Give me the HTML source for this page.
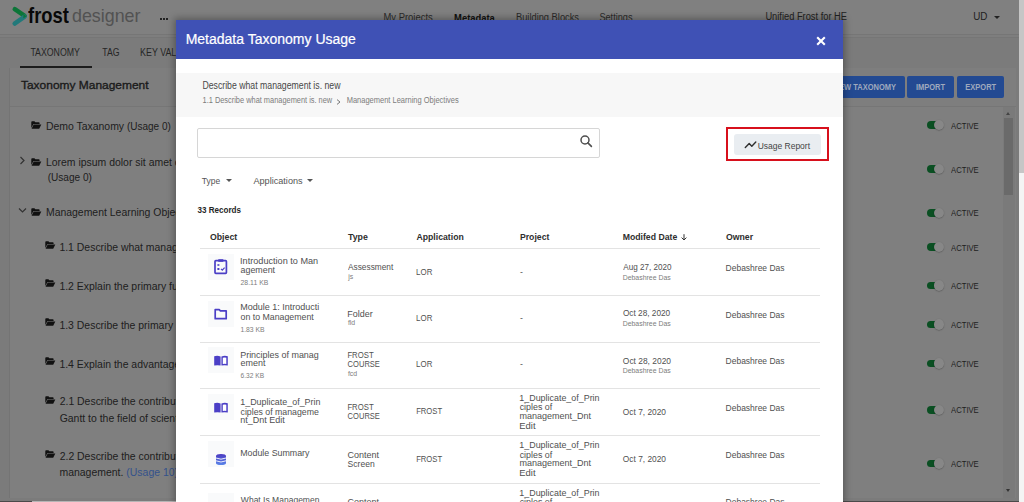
<!DOCTYPE html>
<html><head><meta charset="utf-8">
<style>
*{margin:0;padding:0;box-sizing:border-box}
html,body{width:1024px;height:502px;overflow:hidden}
body{position:relative;background:#7b7b7b;font-family:"Liberation Sans",sans-serif}
.a{position:absolute}
.t{position:absolute;white-space:nowrap;line-height:1}
</style></head><body>
<div class="a" style="left:0px;top:0px;width:1019px;height:502px;background:#7b7b7b;z-index:0;"></div>
<div class="a" style="left:0px;top:0px;width:1019px;height:34px;background:#808080;z-index:0;"></div>
<div class="a" style="left:0px;top:34px;width:1019px;height:1px;background:#767676;z-index:0;"></div>
<div class="a" style="left:0px;top:35px;width:1019px;height:2px;background:#7e7e7e;z-index:0;"></div>
<div class="a" style="left:0px;top:37px;width:1019px;height:1px;background:#767676;z-index:0;"></div>
<div class="a" style="left:9px;top:68px;width:1007px;height:430px;background:#7f7f7f;z-index:0;border-left:1px solid #747474"></div>
<div class="a" style="left:10px;top:68px;width:1006px;height:38px;background:#7e7e7e;z-index:0;"></div>
<div class="a" style="left:10px;top:106px;width:1006px;height:1px;background:#767676;z-index:0;"></div>
<svg class="a" style="left:8px;top:3px;z-index:1" width="22" height="26" viewBox="0 0 22 26"><path d="M6.8 6.2 L16.6 12.8" stroke="#0c7538" stroke-width="4.6" stroke-linecap="round"/><path d="M16.6 13.6 L6.6 20.6" stroke="#22797a" stroke-width="4.4" stroke-linecap="round"/><path d="M15.4 11.2 L18.6 13.2 L15.4 15.2Z" fill="#0c7538"/></svg>
<div class="t" style="left:28.12px;top:7.59px;font-size:18.36px;font-weight:bold;color:#080808;transform:scaleY(1.245);transform-origin:0 15.61px;z-index:1;">frost</div>
<div class="t" style="left:71.99px;top:8.42px;font-size:17.86px;color:#525252;z-index:1;">designer</div>
<div class="a" style="left:159.5px;top:18px;width:2px;height:2px;background:#222;z-index:1"></div><div class="a" style="left:162.8px;top:18px;width:2px;height:2px;background:#222;z-index:1"></div><div class="a" style="left:166px;top:18px;width:2px;height:2px;background:#222;z-index:1"></div>
<div class="t" style="left:383.44px;top:13.47px;font-size:9.45px;color:#2a2a2a;transform:scaleY(1.169);transform-origin:0 8.03px;z-index:1;">My Projects</div>
<div class="t" style="left:454.09px;top:13.50px;font-size:9.42px;font-weight:bold;color:#111;transform:scaleY(1.173);transform-origin:0 8.00px;z-index:1;">Metadata</div>
<div class="t" style="left:515.96px;top:13.59px;font-size:9.30px;color:#2a2a2a;transform:scaleY(1.188);transform-origin:0 7.91px;z-index:1;">Building Blocks</div>
<div class="t" style="left:599.39px;top:13.69px;font-size:9.19px;color:#2a2a2a;transform:scaleY(1.202);transform-origin:0 7.81px;z-index:1;">Settings</div>
<div class="t" style="left:765.40px;top:12.59px;font-size:9.30px;color:#222;transform:scaleY(1.188);transform-origin:0 7.91px;z-index:1;">Unified Frost for HE</div>
<div class="t" style="left:973.26px;top:12.33px;font-size:9.85px;color:#222;transform:scaleY(1.092);transform-origin:0 8.37px;z-index:1;">UD</div>
<div class="a" style="left:994px;top:16px;width:0;height:0;border-left:3px solid transparent;border-right:3px solid transparent;border-top:3px solid #222;z-index:1"></div>
<div class="t" style="left:30.42px;top:48.64px;font-size:8.78px;color:#262626;transform:scaleY(1.209);transform-origin:0 7.46px;z-index:1;">TAXONOMY</div>
<div class="t" style="left:102.33px;top:48.68px;font-size:8.73px;color:#262626;transform:scaleY(1.215);transform-origin:0 7.42px;z-index:1;">TAG</div>
<div class="t" style="left:140.09px;top:48.54px;font-size:8.90px;color:#262626;transform:scaleY(1.192);transform-origin:0 7.57px;z-index:1;">KEY VALUE</div>
<div class="a" style="left:20px;top:66px;width:72px;height:2px;background:#1c1c1c;z-index:1;"></div>
<div class="t" style="left:21.01px;top:79.53px;font-size:11.96px;color:#1a1a1a;transform:scaleY(0.948);transform-origin:0 10.17px;z-index:1;-webkit-text-stroke:0.35px #1a1a1a;">Taxonomy Management</div>
<div class="a" style="left:907px;top:76px;width:47px;height:22px;background:#234a92;z-index:1;border-radius:2px"></div>
<div class="t" style="left:915.91px;top:84.31px;font-size:7.52px;font-weight:bold;color:#9fa9bd;transform:scaleY(1.159);transform-origin:0 6.39px;z-index:1;">IMPORT</div>
<div class="a" style="left:957px;top:76px;width:47px;height:22px;background:#234a92;z-index:1;border-radius:2px"></div>
<div class="t" style="left:965.31px;top:84.31px;font-size:7.52px;font-weight:bold;color:#9fa9bd;transform:scaleY(1.159);transform-origin:0 6.39px;z-index:1;">EXPORT</div>
<div class="a" style="left:800px;top:76px;width:105px;height:22px;background:#234a92;z-index:1;border-radius:2px"></div>
<div class="t" style="left:833.56px;top:84.31px;font-size:7.52px;font-weight:bold;color:#9fa9bd;transform:scaleY(1.159);transform-origin:0 6.39px;z-index:1;">NEW TAXONOMY</div>
<svg class="a" style="left:31px;top:120.5px;z-index:1" width="10.5" height="8.2" viewBox="0 0 11 9" preserveAspectRatio="none"><path d="M0.3 1.2 Q0.3 0.3 1.2 0.3 H3.6 L4.6 1.3 H8.2 Q9 1.3 9 2.1 V3.2 H2.6 L0.3 7.8Z" fill="#111"/><path d="M2.8 3.9 H10.8 L8.6 8.6 H0.6Z" fill="#111"/></svg>
<svg class="a" style="left:31px;top:158px;z-index:1" width="10.5" height="8.2" viewBox="0 0 11 9" preserveAspectRatio="none"><path d="M0.3 1.2 Q0.3 0.3 1.2 0.3 H3.6 L4.6 1.3 H8.2 Q9 1.3 9 2.1 V3.2 H2.6 L0.3 7.8Z" fill="#111"/><path d="M2.8 3.9 H10.8 L8.6 8.6 H0.6Z" fill="#111"/></svg>
<svg class="a" style="left:31px;top:208px;z-index:1" width="10.5" height="8.2" viewBox="0 0 11 9" preserveAspectRatio="none"><path d="M0.3 1.2 Q0.3 0.3 1.2 0.3 H3.6 L4.6 1.3 H8.2 Q9 1.3 9 2.1 V3.2 H2.6 L0.3 7.8Z" fill="#111"/><path d="M2.8 3.9 H10.8 L8.6 8.6 H0.6Z" fill="#111"/></svg>
<svg class="a" style="left:45px;top:240.5px;z-index:1" width="10.5" height="8.2" viewBox="0 0 11 9" preserveAspectRatio="none"><path d="M0.3 1.2 Q0.3 0.3 1.2 0.3 H3.6 L4.6 1.3 H8.2 Q9 1.3 9 2.1 V3.2 H2.6 L0.3 7.8Z" fill="#111"/><path d="M2.8 3.9 H10.8 L8.6 8.6 H0.6Z" fill="#111"/></svg>
<svg class="a" style="left:45px;top:279.3px;z-index:1" width="10.5" height="8.2" viewBox="0 0 11 9" preserveAspectRatio="none"><path d="M0.3 1.2 Q0.3 0.3 1.2 0.3 H3.6 L4.6 1.3 H8.2 Q9 1.3 9 2.1 V3.2 H2.6 L0.3 7.8Z" fill="#111"/><path d="M2.8 3.9 H10.8 L8.6 8.6 H0.6Z" fill="#111"/></svg>
<svg class="a" style="left:45px;top:318px;z-index:1" width="10.5" height="8.2" viewBox="0 0 11 9" preserveAspectRatio="none"><path d="M0.3 1.2 Q0.3 0.3 1.2 0.3 H3.6 L4.6 1.3 H8.2 Q9 1.3 9 2.1 V3.2 H2.6 L0.3 7.8Z" fill="#111"/><path d="M2.8 3.9 H10.8 L8.6 8.6 H0.6Z" fill="#111"/></svg>
<svg class="a" style="left:45px;top:357.3px;z-index:1" width="10.5" height="8.2" viewBox="0 0 11 9" preserveAspectRatio="none"><path d="M0.3 1.2 Q0.3 0.3 1.2 0.3 H3.6 L4.6 1.3 H8.2 Q9 1.3 9 2.1 V3.2 H2.6 L0.3 7.8Z" fill="#111"/><path d="M2.8 3.9 H10.8 L8.6 8.6 H0.6Z" fill="#111"/></svg>
<svg class="a" style="left:45px;top:396px;z-index:1" width="10.5" height="8.2" viewBox="0 0 11 9" preserveAspectRatio="none"><path d="M0.3 1.2 Q0.3 0.3 1.2 0.3 H3.6 L4.6 1.3 H8.2 Q9 1.3 9 2.1 V3.2 H2.6 L0.3 7.8Z" fill="#111"/><path d="M2.8 3.9 H10.8 L8.6 8.6 H0.6Z" fill="#111"/></svg>
<svg class="a" style="left:45px;top:449.6px;z-index:1" width="10.5" height="8.2" viewBox="0 0 11 9" preserveAspectRatio="none"><path d="M0.3 1.2 Q0.3 0.3 1.2 0.3 H3.6 L4.6 1.3 H8.2 Q9 1.3 9 2.1 V3.2 H2.6 L0.3 7.8Z" fill="#111"/><path d="M2.8 3.9 H10.8 L8.6 8.6 H0.6Z" fill="#111"/></svg>
<svg class="a" style="left:19px;top:156px;z-index:1" width="7" height="9" viewBox="0 0 7 9"><path d="M1.5 1 L5 4.5 L1.5 8" stroke="#333" stroke-width="1.2" fill="none"/></svg>
<svg class="a" style="left:18px;top:207px;z-index:1" width="9" height="7" viewBox="0 0 9 7"><path d="M1 1.5 L4.5 5 L8 1.5" stroke="#333" stroke-width="1.2" fill="none"/></svg>
<div class="t" style="left:59.42px;top:320.62px;font-size:10.45px;color:#202020;transform:scaleY(1.113);transform-origin:0 8.88px;z-index:1;">1.3 Describe the primary roles</div>
<div class="t" style="left:45.96px;top:121.82px;font-size:10.45px;color:#202020;transform:scaleY(1.113);transform-origin:0 8.88px;z-index:1;">Demo Taxanomy</div>
<div class="t" style="left:126.90px;top:122.20px;font-size:10.00px;color:#202020;transform:scaleY(1.163);transform-origin:0 8.50px;z-index:1;">(Usage 0)</div>
<div class="t" style="left:45.96px;top:157.52px;font-size:10.45px;color:#202020;transform:scaleY(1.113);transform-origin:0 8.88px;z-index:1;">Lorem ipsum dolor sit amet consectetur</div>
<div class="t" style="left:47.70px;top:173.14px;font-size:10.07px;color:#202020;transform:scaleY(1.155);transform-origin:0 8.56px;z-index:1;">(Usage 0)</div>
<div class="t" style="left:45.96px;top:208.42px;font-size:10.45px;color:#202020;transform:scaleY(1.113);transform-origin:0 8.88px;z-index:1;">Management Learning Objectives</div>
<div class="t" style="left:59.42px;top:243.12px;font-size:10.45px;color:#202020;transform:scaleY(1.113);transform-origin:0 8.88px;z-index:1;">1.1 Describe what management is. new</div>
<div class="t" style="left:59.42px;top:281.92px;font-size:10.45px;color:#202020;transform:scaleY(1.113);transform-origin:0 8.88px;z-index:1;">1.2 Explain the primary functions</div>
<div class="t" style="left:59.42px;top:359.72px;font-size:10.45px;color:#202020;transform:scaleY(1.113);transform-origin:0 8.88px;z-index:1;">1.4 Explain the advantages</div>
<div class="t" style="left:59.68px;top:397.42px;font-size:10.45px;color:#202020;transform:scaleY(1.113);transform-origin:0 8.88px;z-index:1;">2.1 Describe the contributions of</div>
<div class="t" style="left:59.68px;top:414.12px;font-size:10.45px;color:#202020;transform:scaleY(1.113);transform-origin:0 8.88px;z-index:1;">Gantt to the field of scientific</div>
<div class="t" style="left:59.68px;top:451.52px;font-size:10.45px;color:#202020;transform:scaleY(1.113);transform-origin:0 8.88px;z-index:1;">2.2 Describe the contributions</div>
<div class="t" style="left:59.52px;top:467.62px;font-size:10.45px;color:#202020;transform:scaleY(1.113);transform-origin:0 8.88px;z-index:1;">management.  </div>
<div class="t" style="left:126.37px;top:467.62px;font-size:10.45px;color:#34528c;transform:scaleY(1.113);transform-origin:0 8.88px;z-index:1;">(Usage 10)</div>
<div class="a" style="left:926.7px;top:121.1px;width:15px;height:7.8px;border-radius:4px;background:#0a4f22;z-index:1"></div>
<div class="a" style="left:933.8px;top:119.8px;width:10.4px;height:10.4px;border-radius:50%;background:#878787;box-shadow:0 0.5px 1.2px rgba(0,0,0,.35);z-index:1"></div>
<div class="t" style="left:951.10px;top:122.70px;font-size:7.65px;color:#1e1e1e;transform:scaleY(1.216);transform-origin:0 6.50px;z-index:1;">ACTIVE</div>
<div class="a" style="left:926.7px;top:165.1px;width:15px;height:7.8px;border-radius:4px;background:#0a4f22;z-index:1"></div>
<div class="a" style="left:933.8px;top:163.8px;width:10.4px;height:10.4px;border-radius:50%;background:#878787;box-shadow:0 0.5px 1.2px rgba(0,0,0,.35);z-index:1"></div>
<div class="t" style="left:951.10px;top:166.70px;font-size:7.65px;color:#1e1e1e;transform:scaleY(1.216);transform-origin:0 6.50px;z-index:1;">ACTIVE</div>
<div class="a" style="left:926.7px;top:208.8px;width:15px;height:7.8px;border-radius:4px;background:#0a4f22;z-index:1"></div>
<div class="a" style="left:933.8px;top:207.5px;width:10.4px;height:10.4px;border-radius:50%;background:#878787;box-shadow:0 0.5px 1.2px rgba(0,0,0,.35);z-index:1"></div>
<div class="t" style="left:951.10px;top:210.40px;font-size:7.65px;color:#1e1e1e;transform:scaleY(1.216);transform-origin:0 6.50px;z-index:1;">ACTIVE</div>
<div class="a" style="left:926.7px;top:242.9px;width:15px;height:7.8px;border-radius:4px;background:#0a4f22;z-index:1"></div>
<div class="a" style="left:933.8px;top:241.6px;width:10.4px;height:10.4px;border-radius:50%;background:#878787;box-shadow:0 0.5px 1.2px rgba(0,0,0,.35);z-index:1"></div>
<div class="t" style="left:951.10px;top:244.50px;font-size:7.65px;color:#1e1e1e;transform:scaleY(1.216);transform-origin:0 6.50px;z-index:1;">ACTIVE</div>
<div class="a" style="left:926.7px;top:281.6px;width:15px;height:7.8px;border-radius:4px;background:#0a4f22;z-index:1"></div>
<div class="a" style="left:933.8px;top:280.3px;width:10.4px;height:10.4px;border-radius:50%;background:#878787;box-shadow:0 0.5px 1.2px rgba(0,0,0,.35);z-index:1"></div>
<div class="t" style="left:951.10px;top:283.20px;font-size:7.65px;color:#1e1e1e;transform:scaleY(1.216);transform-origin:0 6.50px;z-index:1;">ACTIVE</div>
<div class="a" style="left:926.7px;top:320.7px;width:15px;height:7.8px;border-radius:4px;background:#0a4f22;z-index:1"></div>
<div class="a" style="left:933.8px;top:319.4px;width:10.4px;height:10.4px;border-radius:50%;background:#878787;box-shadow:0 0.5px 1.2px rgba(0,0,0,.35);z-index:1"></div>
<div class="t" style="left:951.10px;top:322.30px;font-size:7.65px;color:#1e1e1e;transform:scaleY(1.216);transform-origin:0 6.50px;z-index:1;">ACTIVE</div>
<div class="a" style="left:926.7px;top:359.6px;width:15px;height:7.8px;border-radius:4px;background:#0a4f22;z-index:1"></div>
<div class="a" style="left:933.8px;top:358.3px;width:10.4px;height:10.4px;border-radius:50%;background:#878787;box-shadow:0 0.5px 1.2px rgba(0,0,0,.35);z-index:1"></div>
<div class="t" style="left:951.10px;top:361.20px;font-size:7.65px;color:#1e1e1e;transform:scaleY(1.216);transform-origin:0 6.50px;z-index:1;">ACTIVE</div>
<div class="a" style="left:926.7px;top:405.8px;width:15px;height:7.8px;border-radius:4px;background:#0a4f22;z-index:1"></div>
<div class="a" style="left:933.8px;top:404.5px;width:10.4px;height:10.4px;border-radius:50%;background:#878787;box-shadow:0 0.5px 1.2px rgba(0,0,0,.35);z-index:1"></div>
<div class="t" style="left:951.10px;top:407.40px;font-size:7.65px;color:#1e1e1e;transform:scaleY(1.216);transform-origin:0 6.50px;z-index:1;">ACTIVE</div>
<div class="a" style="left:926.7px;top:459.7px;width:15px;height:7.8px;border-radius:4px;background:#0a4f22;z-index:1"></div>
<div class="a" style="left:933.8px;top:458.4px;width:10.4px;height:10.4px;border-radius:50%;background:#878787;box-shadow:0 0.5px 1.2px rgba(0,0,0,.35);z-index:1"></div>
<div class="t" style="left:951.10px;top:461.30px;font-size:7.65px;color:#1e1e1e;transform:scaleY(1.216);transform-origin:0 6.50px;z-index:1;">ACTIVE</div>
<div class="a" style="left:1003px;top:107px;width:12px;height:391px;background:#7a7a7a;z-index:1;"></div>
<div class="a" style="left:1004px;top:118px;width:9px;height:77px;background:#6a6a6a;z-index:1;"></div>
<div class="a" style="left:1006px;top:112px;width:0;height:0;border-left:2.5px solid transparent;border-right:2.5px solid transparent;border-bottom:3px solid #444;z-index:1"></div>
<div class="a" style="left:1006px;top:489px;width:0;height:0;border-left:2.5px solid transparent;border-right:2.5px solid transparent;border-top:3px solid #333;z-index:1"></div>
<div class="a" style="left:1019px;top:0px;width:5px;height:173px;background:#c6c6c6;z-index:1;"></div>
<div class="a" style="left:1019px;top:173px;width:5px;height:329px;background:#f4f4f4;z-index:1;"></div>
<div class="a" style="left:0px;top:501px;width:32px;height:1px;background:#4a4a4a;z-index:5;"></div>
<div class="a" style="left:32px;top:501px;width:144px;height:1px;background:#b5b5b5;z-index:5;"></div>
<div class="a" style="left:176px;top:501px;width:843px;height:1px;background:#4a4a4a;z-index:5;"></div>
<div class="a" style="left:176px;top:20px;width:667px;height:482px;background:#fff;z-index:10;box-shadow:0 0 7px 2px rgba(0,0,0,.3)"></div>
<div class="a" style="left:176px;top:20px;width:667px;height:39px;background:#3f51b5;z-index:10;"></div>
<div class="t" style="left:185.68px;top:32.09px;font-size:14.01px;color:#fff;transform:scaleY(1.068);transform-origin:0 11.91px;z-index:10;-webkit-text-stroke:0.2px #fff;">Metadata Taxonomy Usage</div>
<svg class="a" style="left:816px;top:35.5px;z-index:10" width="10" height="10" viewBox="0 0 10 10"><path d="M1.2 1.2L8.8 8.8M8.8 1.2L1.2 8.8" stroke="#fff" stroke-width="2.1"/></svg>
<div class="a" style="left:176px;top:73px;width:667px;height:44px;background:#f7f7f7;z-index:10;"></div>
<div class="t" style="left:202.40px;top:81.98px;font-size:8.73px;color:#474747;transform:scaleY(1.148);transform-origin:0 7.42px;z-index:10;">Describe what management is. new</div>
<div class="t" style="left:202.54px;top:96.99px;font-size:7.42px;color:#7c7c7c;transform:scaleY(1.097);transform-origin:0 6.31px;z-index:10;">1.1 Describe what management is. new</div>
<svg class="a" style="left:336px;top:98.5px;z-index:10" width="5" height="6" viewBox="0 0 5 6"><path d="M1 0.6 L4 3 L1 5.4" stroke="#777" stroke-width="1" fill="none"/></svg>
<div class="t" style="left:346.65px;top:97.13px;font-size:7.50px;color:#7c7c7c;transform:scaleY(1.086);transform-origin:0 6.37px;z-index:10;">Management Learning Objectives</div>
<div class="a" style="left:197px;top:128px;width:403px;height:30px;background:#fff;z-index:10;border:1px solid #d6d6d6;border-radius:2px;box-sizing:border-box"></div>
<svg class="a" style="left:578px;top:133px;z-index:10" width="16" height="16" viewBox="0 0 16 16"><circle cx="7" cy="7" r="4" stroke="#4e4e4e" stroke-width="1.5" fill="none"/><path d="M9.9 9.9 L13.4 13.4" stroke="#4e4e4e" stroke-width="1.6" stroke-linecap="round"/></svg>
<div class="a" style="left:726px;top:127px;width:103px;height:34px;background:transparent;z-index:10;border:2.2px solid #d7101c;box-sizing:border-box"></div>
<div class="a" style="left:734px;top:134px;width:87px;height:21px;background:#e9edf1;z-index:10;border-radius:3px"></div>
<svg class="a" style="left:744px;top:140px;z-index:10" width="13" height="9" viewBox="0 0 13 9"><path d="M1.3 7.6 L5.2 3.6 L7.8 6.2 L11.8 2" stroke="#2f2f2f" stroke-width="1.4" fill="none" stroke-linecap="round" stroke-linejoin="round"/></svg>
<div class="t" style="left:757.76px;top:141.59px;font-size:8.48px;color:#444;transform:scaleY(1.114);transform-origin:0 7.21px;z-index:10;">Usage Report</div>
<div class="t" style="left:201.83px;top:177.00px;font-size:8.48px;color:#555;transform:scaleY(1.080);transform-origin:0 7.20px;z-index:10;">Type</div>
<div class="a" style="left:225.5px;top:179px;width:0;height:0;border-left:3px solid transparent;border-right:3px solid transparent;border-top:3.3px solid #555;z-index:10"></div>
<div class="t" style="left:253.40px;top:177.44px;font-size:9.13px;color:#555;z-index:10;">Applications</div>
<div class="a" style="left:307.4px;top:179px;width:0;height:0;border-left:3px solid transparent;border-right:3px solid transparent;border-top:3.3px solid #555;z-index:10"></div>
<div class="t" style="left:197.60px;top:206.85px;font-size:8.06px;font-weight:bold;color:#262626;transform:scaleY(1.137);transform-origin:0 6.85px;z-index:10;">33 Records</div>
<div class="t" style="left:209.95px;top:232.76px;font-size:8.76px;font-weight:bold;color:#2e2e2e;z-index:10;">Object</div>
<div class="t" style="left:347.91px;top:232.72px;font-size:8.80px;font-weight:bold;color:#2e2e2e;z-index:10;">Type</div>
<div class="t" style="left:416.53px;top:232.83px;font-size:8.68px;font-weight:bold;color:#2e2e2e;z-index:10;">Application</div>
<div class="t" style="left:519.94px;top:232.82px;font-size:8.69px;font-weight:bold;color:#2e2e2e;z-index:10;">Project</div>
<div class="t" style="left:622.68px;top:232.80px;font-size:8.70px;font-weight:bold;color:#2e2e2e;z-index:10;">Modifed Date</div>
<svg class="a" style="left:680px;top:233px;z-index:10" width="8" height="8" viewBox="0 0 8 8"><path d="M4 1.2 V7 M1.6 4.6 L4 7 L6.4 4.6" stroke="#333" stroke-width="1" fill="none"/></svg>
<div class="t" style="left:725.90px;top:232.77px;font-size:8.74px;font-weight:bold;color:#2e2e2e;z-index:10;">Owner</div>
<div class="a" style="left:200px;top:248px;width:620px;height:1px;background:#e3e3e3;z-index:10;"></div>
<div class="a" style="left:200px;top:295px;width:620px;height:1px;background:#e3e3e3;z-index:10;"></div>
<div class="a" style="left:200px;top:342px;width:620px;height:1px;background:#e3e3e3;z-index:10;"></div>
<div class="a" style="left:200px;top:388px;width:620px;height:1px;background:#e3e3e3;z-index:10;"></div>
<div class="a" style="left:200px;top:435px;width:620px;height:1px;background:#e3e3e3;z-index:10;"></div>
<div class="a" style="left:200px;top:483px;width:620px;height:1px;background:#e3e3e3;z-index:10;"></div>
<div class="a" style="left:208px;top:254px;width:26px;height:26px;background:#f9fafb;z-index:10;"></div>
<div class="a" style="left:208px;top:301px;width:26px;height:26px;background:#f9fafb;z-index:10;"></div>
<div class="a" style="left:208px;top:347px;width:26px;height:26px;background:#f9fafb;z-index:10;"></div>
<div class="a" style="left:208px;top:394px;width:26px;height:26px;background:#f9fafb;z-index:10;"></div>
<div class="a" style="left:208px;top:441px;width:26px;height:26px;background:#f9fafb;z-index:10;"></div>
<div class="a" style="left:208px;top:492.7px;width:26px;height:26.000000000000057px;background:#f9fafb;z-index:10;"></div>
<svg class="a" style="left:213px;top:258px;z-index:10" width="16" height="18" viewBox="0 0 16 18"><rect x="2" y="2.7" width="11.4" height="12.6" rx="0.8" stroke="#4b3fc6" stroke-width="1.7" fill="none"/><path d="M5.3 1.2 H10.3 V3.8 H5.3Z" fill="#4b3fc6"/><rect x="4.4" y="6.2" width="2" height="1.6" fill="#4b3fc6"/><rect x="4.4" y="10" width="2" height="2" fill="#4b3fc6"/><path d="M8 10.9 L9.3 12.2 L11.6 9.6" stroke="#4b3fc6" stroke-width="1.2" fill="none"/></svg>
<svg class="a" style="left:213px;top:307px;z-index:10" width="16" height="14" viewBox="0 0 16 14"><path d="M2.2 2.6 H6.2 L7.4 3.8 H13.2 V11.7 H2.2Z" stroke="#4b3fc6" stroke-width="1.7" fill="none" stroke-linejoin="round"/></svg>
<svg class="a" style="left:213px;top:354.5px;z-index:10" width="16" height="12" viewBox="0 0 16 12"><path d="M1.2 1.2 Q4.5 0.4 7.6 1.4 V10.6 Q4.5 9.8 1.2 10.6Z" fill="#4b3fc6"/><path d="M8.4 1.4 Q11.5 0.4 14.8 1.2 V10.6 Q11.5 9.8 8.4 10.6Z" fill="#4b3fc6"/><path d="M9.8 2.8 Q11.5 2.4 13.3 2.7 V8.9 Q11.5 8.6 9.8 9Z" fill="#fff"/></svg>
<svg class="a" style="left:213px;top:401.5px;z-index:10" width="16" height="12" viewBox="0 0 16 12"><path d="M1.2 1.2 Q4.5 0.4 7.6 1.4 V10.6 Q4.5 9.8 1.2 10.6Z" fill="#4b3fc6"/><path d="M8.4 1.4 Q11.5 0.4 14.8 1.2 V10.6 Q11.5 9.8 8.4 10.6Z" fill="#4b3fc6"/><path d="M9.8 2.8 Q11.5 2.4 13.3 2.7 V8.9 Q11.5 8.6 9.8 9Z" fill="#fff"/></svg>
<svg class="a" style="left:215px;top:452.5px;z-index:10" width="12" height="13" viewBox="0 0 12 13"><defs><linearGradient id="dbg" x1="0" y1="0" x2="0" y2="1"><stop offset="0" stop-color="#4a38c0"/><stop offset="1" stop-color="#5a86ea"/></linearGradient></defs><path d="M1 3 Q1 1 6 1 Q11 1 11 3 V10 Q11 12 6 12 Q1 12 1 10Z" fill="url(#dbg)"/><path d="M1 5 Q6 7.4 11 5 M1 7.8 Q6 10.2 11 7.8" stroke="#fff" stroke-width="0.9" fill="none"/></svg>
<div class="t" style="left:240.08px;top:257.42px;font-size:9.15px;color:#505050;transform:scaleY(0.969);transform-origin:0 7.78px;z-index:10;">Introduction to Man</div>
<div class="t" style="left:240.56px;top:280.35px;font-size:6.88px;color:#7d7d7d;transform:scaleY(1.099);transform-origin:0 5.85px;z-index:10;">28.11 KB</div>
<div class="t" style="left:240.55px;top:266.26px;font-size:8.87px;color:#505050;z-index:10;">agement</div>
<div class="t" style="left:348.00px;top:263.43px;font-size:8.32px;color:#505050;transform:scaleY(1.066);transform-origin:0 7.07px;z-index:10;">Assessment</div>
<div class="t" style="left:348.17px;top:274.25px;font-size:6.88px;color:#7d7d7d;transform:scaleY(1.099);transform-origin:0 5.85px;z-index:10;">js</div>
<div class="t" style="left:416.12px;top:268.78px;font-size:7.90px;color:#505050;transform:scaleY(1.122);transform-origin:0 6.72px;z-index:10;">LOR</div>
<div class="t" style="left:520.11px;top:268.11px;font-size:8.69px;color:#505050;z-index:10;">-</div>
<div class="t" style="left:623.25px;top:264.35px;font-size:8.11px;color:#505050;transform:scaleY(1.093);transform-origin:0 6.90px;z-index:10;">Aug 27, 2020</div>
<div class="t" style="left:622.70px;top:274.72px;font-size:6.91px;color:#7d7d7d;transform:scaleY(1.093);transform-origin:0 5.88px;z-index:10;">Debashree Das</div>
<div class="t" style="left:725.57px;top:264.04px;font-size:8.49px;color:#505050;transform:scaleY(1.045);transform-origin:0 7.21px;z-index:10;">Debashree Das</div>
<div class="t" style="left:240.18px;top:302.84px;font-size:9.02px;color:#505050;z-index:10;">Module 1: Introducti</div>
<div class="t" style="left:240.55px;top:312.53px;font-size:8.79px;color:#505050;z-index:10;">on to Management</div>
<div class="t" style="left:240.39px;top:326.56px;font-size:6.81px;color:#7d7d7d;transform:scaleY(1.110);transform-origin:0 5.79px;z-index:10;">1.83 KB</div>
<div class="t" style="left:347.28px;top:309.89px;font-size:8.96px;color:#505050;z-index:10;">Folder</div>
<div class="t" style="left:347.90px;top:320.25px;font-size:6.88px;color:#7d7d7d;transform:scaleY(1.099);transform-origin:0 5.85px;z-index:10;">fld</div>
<div class="t" style="left:416.12px;top:315.03px;font-size:7.90px;color:#505050;transform:scaleY(1.122);transform-origin:0 6.72px;z-index:10;">LOR</div>
<div class="t" style="left:520.11px;top:314.11px;font-size:8.69px;color:#505050;z-index:10;">-</div>
<div class="t" style="left:622.88px;top:310.46px;font-size:8.28px;color:#505050;transform:scaleY(1.071);transform-origin:0 7.04px;z-index:10;">Oct 28, 2020</div>
<div class="t" style="left:622.70px;top:320.97px;font-size:6.91px;color:#7d7d7d;transform:scaleY(1.093);transform-origin:0 5.88px;z-index:10;">Debashree Das</div>
<div class="t" style="left:725.57px;top:310.79px;font-size:8.49px;color:#505050;transform:scaleY(1.045);transform-origin:0 7.21px;z-index:10;">Debashree Das</div>
<div class="t" style="left:240.18px;top:350.63px;font-size:8.96px;color:#505050;z-index:10;">Principles of manag</div>
<div class="t" style="left:240.54px;top:359.37px;font-size:8.97px;color:#505050;z-index:10;">ement</div>
<div class="t" style="left:240.57px;top:373.28px;font-size:6.61px;color:#7d7d7d;transform:scaleY(1.143);transform-origin:0 5.62px;z-index:10;">6.32 KB</div>
<div class="t" style="left:347.38px;top:352.31px;font-size:7.75px;color:#505050;transform:scaleY(1.144);transform-origin:0 6.59px;z-index:10;">FROST</div>
<div class="t" style="left:347.62px;top:361.48px;font-size:7.55px;color:#505050;transform:scaleY(1.174);transform-origin:0 6.42px;z-index:10;">COURSE</div>
<div class="t" style="left:347.90px;top:371.45px;font-size:6.88px;color:#7d7d7d;transform:scaleY(1.099);transform-origin:0 5.85px;z-index:10;">fcd</div>
<div class="t" style="left:416.12px;top:361.18px;font-size:7.90px;color:#505050;transform:scaleY(1.122);transform-origin:0 6.72px;z-index:10;">LOR</div>
<div class="t" style="left:520.11px;top:360.11px;font-size:8.69px;color:#505050;z-index:10;">-</div>
<div class="t" style="left:622.87px;top:356.54px;font-size:8.42px;color:#505050;transform:scaleY(1.053);transform-origin:0 7.16px;z-index:10;">Oct 28, 2020</div>
<div class="t" style="left:622.70px;top:367.52px;font-size:6.91px;color:#7d7d7d;transform:scaleY(1.093);transform-origin:0 5.88px;z-index:10;">Debashree Das</div>
<div class="t" style="left:725.57px;top:357.49px;font-size:8.49px;color:#505050;transform:scaleY(1.045);transform-origin:0 7.21px;z-index:10;">Debashree Das</div>
<div class="t" style="left:240.23px;top:398.42px;font-size:8.92px;color:#505050;z-index:10;">1_Duplicate_of_Prin</div>
<div class="t" style="left:240.55px;top:407.56px;font-size:8.75px;color:#505050;z-index:10;">ciples of manageme</div>
<div class="t" style="left:240.31px;top:416.15px;font-size:9.01px;color:#505050;z-index:10;">nt_Dnt Edit</div>
<div class="t" style="left:347.38px;top:404.31px;font-size:7.75px;color:#505050;transform:scaleY(1.144);transform-origin:0 6.59px;z-index:10;">FROST</div>
<div class="t" style="left:347.62px;top:413.48px;font-size:7.55px;color:#505050;transform:scaleY(1.174);transform-origin:0 6.42px;z-index:10;">COURSE</div>
<div class="t" style="left:416.14px;top:408.18px;font-size:7.67px;color:#505050;transform:scaleY(1.155);transform-origin:0 6.52px;z-index:10;">FROST</div>
<div class="t" style="left:519.33px;top:394.23px;font-size:8.91px;color:#505050;z-index:10;">1_Duplicate_of_Prin</div>
<div class="t" style="left:519.64px;top:403.34px;font-size:8.90px;color:#505050;z-index:10;">ciples of</div>
<div class="t" style="left:519.41px;top:412.24px;font-size:9.02px;color:#505050;z-index:10;">management_Dnt</div>
<div class="t" style="left:519.24px;top:420.84px;font-size:9.48px;color:#505050;transform:scaleY(0.935);transform-origin:0 8.06px;z-index:10;">Edit</div>
<div class="t" style="left:622.87px;top:408.29px;font-size:8.36px;color:#505050;transform:scaleY(1.061);transform-origin:0 7.11px;z-index:10;">Oct 7, 2020</div>
<div class="t" style="left:725.57px;top:404.19px;font-size:8.49px;color:#505050;transform:scaleY(1.045);transform-origin:0 7.21px;z-index:10;">Debashree Das</div>
<div class="t" style="left:240.19px;top:449.17px;font-size:8.86px;color:#505050;z-index:10;">Module Summary</div>
<div class="t" style="left:347.55px;top:450.65px;font-size:9.00px;color:#505050;z-index:10;">Content</div>
<div class="t" style="left:347.61px;top:460.11px;font-size:8.58px;color:#505050;transform:scaleY(1.034);transform-origin:0 7.29px;z-index:10;">Screen</div>
<div class="t" style="left:416.14px;top:455.98px;font-size:7.67px;color:#505050;transform:scaleY(1.155);transform-origin:0 6.52px;z-index:10;">FROST</div>
<div class="t" style="left:519.33px;top:441.43px;font-size:8.91px;color:#505050;z-index:10;">1_Duplicate_of_Prin</div>
<div class="t" style="left:519.64px;top:450.54px;font-size:8.90px;color:#505050;z-index:10;">ciples of</div>
<div class="t" style="left:519.41px;top:459.44px;font-size:9.02px;color:#505050;z-index:10;">management_Dnt</div>
<div class="t" style="left:519.24px;top:468.04px;font-size:9.48px;color:#505050;transform:scaleY(0.935);transform-origin:0 8.06px;z-index:10;">Edit</div>
<div class="t" style="left:622.87px;top:455.49px;font-size:8.36px;color:#505050;transform:scaleY(1.061);transform-origin:0 7.11px;z-index:10;">Oct 7, 2020</div>
<div class="t" style="left:725.57px;top:451.39px;font-size:8.49px;color:#505050;transform:scaleY(1.045);transform-origin:0 7.21px;z-index:10;">Debashree Das</div>
<div class="t" style="left:240.86px;top:496.06px;font-size:8.52px;color:#505050;transform:scaleY(1.041);transform-origin:0 7.24px;z-index:10;">What Is Managemen</div>
<div class="t" style="left:347.55px;top:497.85px;font-size:9.00px;color:#505050;z-index:10;">Content</div>
<div class="t" style="left:416.14px;top:502.98px;font-size:7.67px;color:#505050;transform:scaleY(1.155);transform-origin:0 6.52px;z-index:10;">FROST</div>
<div class="t" style="left:519.33px;top:488.73px;font-size:8.91px;color:#505050;z-index:10;">1_Duplicate_of_Prin</div>
<div class="t" style="left:519.64px;top:497.74px;font-size:8.90px;color:#505050;z-index:10;">ciples of</div>
<div class="t" style="left:725.57px;top:498.29px;font-size:8.49px;color:#505050;transform:scaleY(1.045);transform-origin:0 7.21px;z-index:10;">Debashree Das</div>
</body></html>
